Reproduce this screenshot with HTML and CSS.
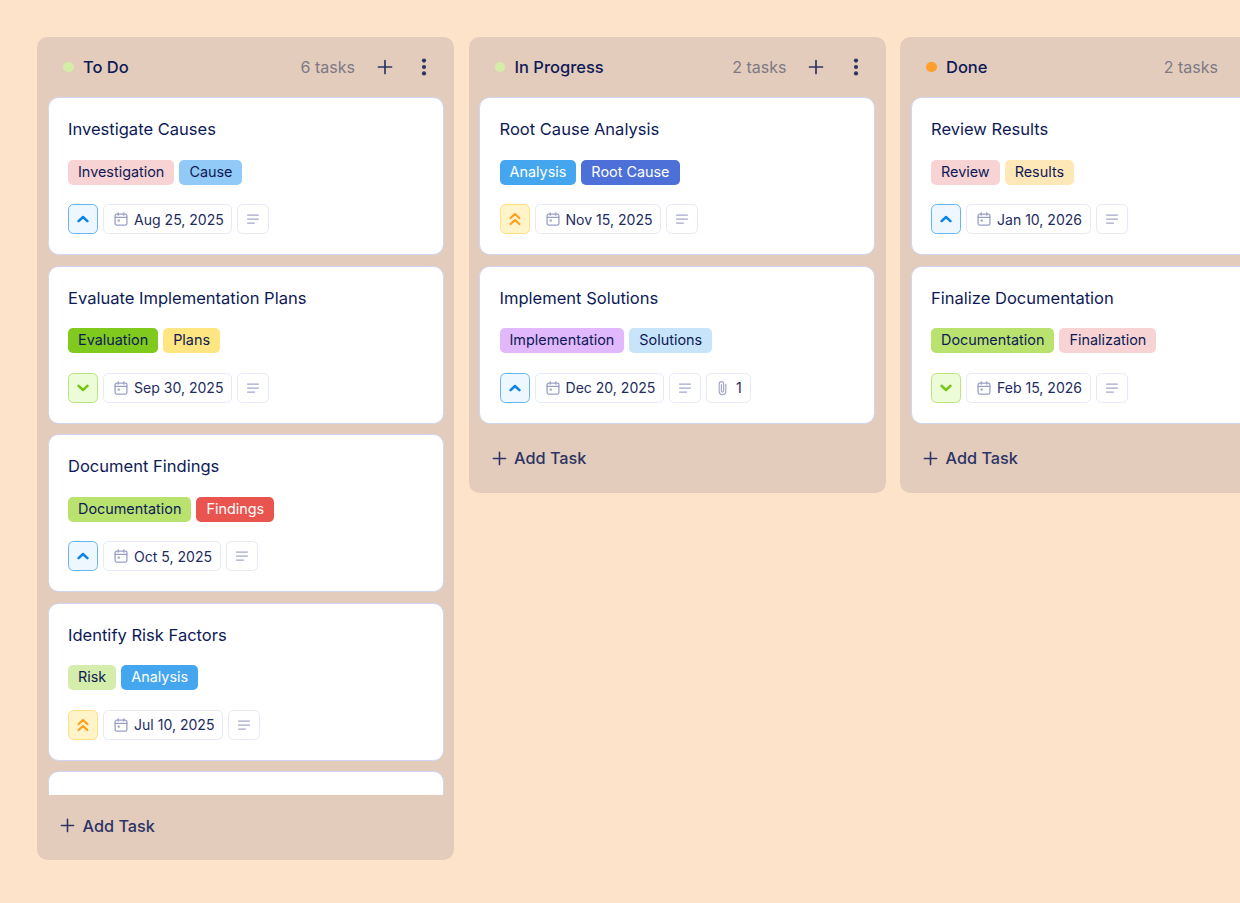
FILE: index.html
```html
<!DOCTYPE html>
<html lang="en">
<head>
<meta charset="utf-8">
<title>Board</title>
<link rel="stylesheet" href="styles.css">
</head>
<body>
<svg class="defs" width="0" height="0" aria-hidden="true">
  <defs>
    <symbol id="i-plus" viewBox="0 0 16 16"><path d="M8 1.5v13M1.5 8h13" fill="none" stroke="currentColor" stroke-width="1.7" stroke-linecap="round"/></symbol>
    <symbol id="i-dots" viewBox="0 0 6 18"><circle cx="3" cy="2.6" r="2.1"/><circle cx="3" cy="9" r="2.1"/><circle cx="3" cy="15.4" r="2.1"/></symbol>
    <symbol id="i-cal" viewBox="0 0 14 14"><g fill="none" stroke="currentColor" stroke-width="1.3" stroke-linecap="round"><rect x="1.1" y="2.2" width="11.8" height="10.9" rx="1.6"/><path d="M1.1 5.4h11.8M4.2.8v2.4M9.8.8v2.4"/></g><rect x="3.6" y="7.6" width="2.2" height="2" fill="currentColor"/></symbol>
    <symbol id="i-lines" viewBox="0 0 12 10"><path d="M.6 1h10.8M.6 5h10.8M.6 9h6.8" fill="none" stroke="currentColor" stroke-width="1.25" stroke-linecap="round"/></symbol>
    <symbol id="i-clip" viewBox="0 0 10 14"><path d="M8 3.6v6.4a3 3 0 0 1-6 0V3.2a2 2 0 0 1 4 0v6.6a1 1 0 0 1-2 0V4" fill="none" stroke="currentColor" stroke-width="1.1" stroke-linecap="round"/></symbol>
    <symbol id="i-up" viewBox="0 0 12 8"><path d="M1.6 6.2 6 2l4.4 4.2" fill="none" stroke="currentColor" stroke-width="2.5" stroke-linecap="round" stroke-linejoin="round"/></symbol>
    <symbol id="i-down" viewBox="0 0 12 8"><path d="M1.6 1.8 6 6l4.4-4.2" fill="none" stroke="currentColor" stroke-width="2.5" stroke-linecap="round" stroke-linejoin="round"/></symbol>
    <symbol id="i-dbl" viewBox="0 0 12 14"><path d="M1.6 6 6 2l4.4 4M1.6 12 6 8l4.4 4" fill="none" stroke="currentColor" stroke-width="2.2" stroke-linecap="round" stroke-linejoin="round"/></symbol>
  </defs>
</svg>
<main class="board">

  <section class="column column-tall">
    <header class="col-head">
      <span class="dot dot-green"></span><h2 class="col-title">To Do</h2>
      <span class="count">6 tasks</span>
      <svg class="head-plus"><use href="#i-plus"/></svg>
      <svg class="head-dots"><use href="#i-dots"/></svg>
    </header>
    <div class="cards">
      <article class="card">
        <h3 class="card-title">Investigate Causes</h3>
        <div class="tags"><span class="tag t-pink">Investigation</span><span class="tag t-sky">Cause</span></div>
        <div class="meta">
          <span class="chip prio p-high"><svg class="ic-up"><use href="#i-up"/></svg></span>
          <span class="chip date"><svg class="ic-cal"><use href="#i-cal"/></svg>Aug 25, 2025</span>
          <span class="chip note"><svg class="ic-lines"><use href="#i-lines"/></svg></span>
        </div>
      </article>
      <article class="card">
        <h3 class="card-title">Evaluate Implementation Plans</h3>
        <div class="tags"><span class="tag t-leaf">Evaluation</span><span class="tag t-yellow">Plans</span></div>
        <div class="meta">
          <span class="chip prio p-low"><svg class="ic-up"><use href="#i-down"/></svg></span>
          <span class="chip date"><svg class="ic-cal"><use href="#i-cal"/></svg>Sep 30, 2025</span>
          <span class="chip note"><svg class="ic-lines"><use href="#i-lines"/></svg></span>
        </div>
      </article>
      <article class="card">
        <h3 class="card-title">Document Findings</h3>
        <div class="tags"><span class="tag t-lime">Documentation</span><span class="tag t-red">Findings</span></div>
        <div class="meta">
          <span class="chip prio p-high"><svg class="ic-up"><use href="#i-up"/></svg></span>
          <span class="chip date"><svg class="ic-cal"><use href="#i-cal"/></svg>Oct 5, 2025</span>
          <span class="chip note"><svg class="ic-lines"><use href="#i-lines"/></svg></span>
        </div>
      </article>
      <article class="card">
        <h3 class="card-title">Identify Risk Factors</h3>
        <div class="tags"><span class="tag t-pale">Risk</span><span class="tag t-blue">Analysis</span></div>
        <div class="meta">
          <span class="chip prio p-urgent"><svg class="ic-dbl"><use href="#i-dbl"/></svg></span>
          <span class="chip date"><svg class="ic-cal"><use href="#i-cal"/></svg>Jul 10, 2025</span>
          <span class="chip note"><svg class="ic-lines"><use href="#i-lines"/></svg></span>
        </div>
      </article>
      <article class="card"></article>
    </div>
    <footer class="add"><svg class="add-plus"><use href="#i-plus"/></svg>Add Task</footer>
  </section>

  <section class="column">
    <header class="col-head">
      <span class="dot dot-green"></span><h2 class="col-title">In Progress</h2>
      <span class="count">2 tasks</span>
      <svg class="head-plus"><use href="#i-plus"/></svg>
      <svg class="head-dots"><use href="#i-dots"/></svg>
    </header>
    <div class="cards">
      <article class="card">
        <h3 class="card-title">Root Cause Analysis</h3>
        <div class="tags"><span class="tag t-blue">Analysis</span><span class="tag t-indigo">Root Cause</span></div>
        <div class="meta">
          <span class="chip prio p-urgent"><svg class="ic-dbl"><use href="#i-dbl"/></svg></span>
          <span class="chip date"><svg class="ic-cal"><use href="#i-cal"/></svg>Nov 15, 2025</span>
          <span class="chip note"><svg class="ic-lines"><use href="#i-lines"/></svg></span>
        </div>
      </article>
      <article class="card">
        <h3 class="card-title">Implement Solutions</h3>
        <div class="tags"><span class="tag t-purple">Implementation</span><span class="tag t-ice">Solutions</span></div>
        <div class="meta">
          <span class="chip prio p-high"><svg class="ic-up"><use href="#i-up"/></svg></span>
          <span class="chip date"><svg class="ic-cal"><use href="#i-cal"/></svg>Dec 20, 2025</span>
          <span class="chip note"><svg class="ic-lines"><use href="#i-lines"/></svg></span>
          <span class="chip attach"><svg class="ic-clip"><use href="#i-clip"/></svg>1</span>
        </div>
      </article>
    </div>
    <footer class="add"><svg class="add-plus"><use href="#i-plus"/></svg>Add Task</footer>
  </section>

  <section class="column">
    <header class="col-head">
      <span class="dot dot-orange"></span><h2 class="col-title">Done</h2>
      <span class="count">2 tasks</span>
      <svg class="head-plus"><use href="#i-plus"/></svg>
      <svg class="head-dots"><use href="#i-dots"/></svg>
    </header>
    <div class="cards">
      <article class="card">
        <h3 class="card-title">Review Results</h3>
        <div class="tags"><span class="tag t-pink">Review</span><span class="tag t-cream">Results</span></div>
        <div class="meta">
          <span class="chip prio p-high"><svg class="ic-up"><use href="#i-up"/></svg></span>
          <span class="chip date"><svg class="ic-cal"><use href="#i-cal"/></svg>Jan 10, 2026</span>
          <span class="chip note"><svg class="ic-lines"><use href="#i-lines"/></svg></span>
        </div>
      </article>
      <article class="card">
        <h3 class="card-title">Finalize Documentation</h3>
        <div class="tags"><span class="tag t-lime">Documentation</span><span class="tag t-pink">Finalization</span></div>
        <div class="meta">
          <span class="chip prio p-low"><svg class="ic-up"><use href="#i-down"/></svg></span>
          <span class="chip date"><svg class="ic-cal"><use href="#i-cal"/></svg>Feb 15, 2026</span>
          <span class="chip note"><svg class="ic-lines"><use href="#i-lines"/></svg></span>
        </div>
      </article>
    </div>
    <footer class="add"><svg class="add-plus"><use href="#i-plus"/></svg>Add Task</footer>
  </section>

</main>
</body>
</html>
```
FILE: styles.css
```css
* { box-sizing: border-box; }
html, body { margin: 0; height: 100%; overflow: hidden; }
body {
  background: #fde3ca;
  font-family: "Inter", "Noto Sans", sans-serif;
  color: #0d1a56;
}
.defs { position: absolute; }
.board {
  display: flex;
  align-items: flex-start;
  gap: 14.5px;
  padding: 37px 0 0 37px;
  width: 1400px;
}
.column {
  flex: 0 0 417px;
  background: #e4ccbc;
  border-radius: 10.5px;
  display: flex;
  flex-direction: column;
}
.column-tall { height: 823px; }
.col-head {
  display: flex;
  align-items: center;
  height: 60px;
  padding: 0 26px;
  flex: none;
}
.dot { width: 10.5px; height: 10.5px; border-radius: 50%; margin-right: 9.5px; flex: none; }
.dot-green { background: #d5eda8; }
.dot-orange { background: #ff9f2e; }
.col-title { margin: 0; font-size: 16.5px; font-weight: 550; letter-spacing: 0; }
.count { margin-left: auto; font-size: 16px; color: #7b7a85; }
.head-plus { width: 16px; height: 16px; margin-left: 21.5px; color: #2c3564; }
.head-dots { width: 6px; height: 18px; margin-left: 28.5px; margin-right: 1px; fill: #2c3564; }
.cards {
  flex: 1 1 auto;
  min-height: 0;
  overflow: hidden;
  padding: 0 10.5px;
  display: flex;
  flex-direction: column;
  gap: 10.5px;
}
.card {
  flex: 0 0 158px;
  background: #fff;
  border: 1.5px solid #ced6f3;
  border-radius: 10.5px;
  padding: 20px 19.5px 0;
}
.card-title { margin: 0; font-size: 16.55px; line-height: 22px; font-weight: 400; }
.tags { display: flex; gap: 5px; margin-top: 19.5px; }
.tag {
  height: 25px;
  padding: 0 10px;
  border-radius: 5px;
  font-size: 14.4px;
  line-height: 24.5px;
  color: #0d1a56;
}
.t-pink { background: #f8d3d3; }
.t-sky { background: #92caf7; }
.t-leaf { background: #7fca1c; }
.t-yellow { background: #ffe680; }
.t-lime { background: #b9e26f; }
.t-red { background: #e9544f; color: #fff; }
.t-pale { background: #d4edaa; }
.t-blue { background: #44a6ee; color: #fff; }
.t-indigo { background: #4c6fd8; color: #fff; }
.t-purple { background: #e0b8fb; }
.t-ice { background: #c8e4fb; }
.t-cream { background: #ffe8b8; }
.meta { display: flex; gap: 5px; margin-top: 19.5px; }
.chip {
  height: 30px;
  border: 1.5px solid #e6eaf8;
  border-radius: 5.5px;
  background: #fff;
  display: flex;
  align-items: center;
  justify-content: center;
}
.prio { width: 30px; }
.p-high { background: #eef7ff; border-color: #64b5f6; color: #0a84e8; }
.p-low { background: #ecfbd8; border-color: #b9e67c; color: #76c511; }
.p-urgent { background: #fff3c9; border-color: #ffe083; color: #ff9f1c; }
.ic-up { width: 12px; height: 8px; }
.ic-dbl { width: 12px; height: 14px; }
.date {
  padding: 0 7.5px 0 10px;
  font-size: 14.05px;
  color: #232c60;
}
.ic-cal { width: 14px; height: 14px; margin-right: 6px; color: #9aa0c4; }
.note { width: 32px; }
.ic-lines { width: 12px; height: 10px; color: #a3a8c9; }
.attach { padding: 0 8px 0 10px; font-size: 14.05px; color: #232c60; }
.ic-clip { width: 11px; height: 16px; margin-right: 8px; color: #a3a8c9; }
.add {
  flex: none;
  height: 69.5px;
  padding: 0 0 0 23px;
  display: flex;
  align-items: center;
  font-size: 16.3px;
  font-weight: 500;
  color: #2c3564;
}
.column-tall .add { height: 65px; padding-bottom: 4px; }
.add-plus { width: 15px; height: 15px; margin-right: 7.5px; }
```
